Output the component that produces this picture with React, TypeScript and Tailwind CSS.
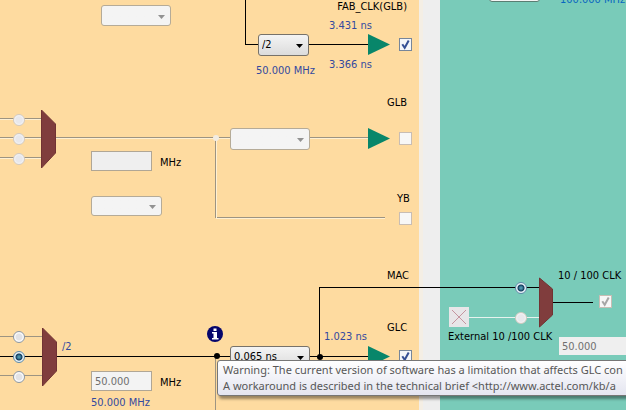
import type { ReactNode } from "react";

const labelFont = "font-['DejaVu_Sans_Condensed','DejaVu_Sans',sans-serif]";

function Caption({ at, htmlFor, children }: { at: string; htmlFor?: string; children: ReactNode }) {
  const cls = `absolute whitespace-nowrap text-[11px] leading-4 ${at}`;
  return htmlFor ? (
    <label htmlFor={htmlFor} className={cls}>{children}</label>
  ) : (
    <span className={cls}>{children}</span>
  );
}

function Dropdown({ at, label, value, disabled }: { at: string; label: string; value?: string; disabled?: boolean }) {
  return (
    <div className={`absolute ${at}`}>
      <select
        aria-label={label}
        disabled={disabled}
        className="block h-full w-full appearance-none rounded-[3px] border border-[#77726a] bg-linear-to-b from-[#f4f4f4] to-[#dcdcdc] pl-[3px] text-[11px] leading-4 text-black opacity-100 disabled:border-[#b5ab98] disabled:from-[#f4f4f4] disabled:to-[#f4f4f4]"
      >
        <option>{value ?? ""}</option>
      </select>
      <svg
        className={`pointer-events-none absolute top-1/2 right-[6px] -mt-px h-1 w-[7px] ${disabled ? "text-[#929292]" : "text-black"}`}
        viewBox="0 0 7 4"
        aria-hidden="true"
      >
        <path d="M0 0h7L3.500 4z" fill="currentColor" />
      </svg>
    </div>
  );
}

function Tick({ at, id, checked, disabled }: { at: string; id: string; checked?: boolean; disabled?: boolean }) {
  return (
    <div className={`absolute size-[13px] ${at}`}>
      <input
        id={id}
        type="checkbox"
        defaultChecked={checked}
        disabled={disabled}
        className="peer block size-full appearance-none border border-[#77869a] bg-[#f4f6f9] disabled:border-[#c8bdb4] disabled:bg-[#f7f7f7]"
      />
      <svg
        className="pointer-events-none absolute inset-0 hidden text-[#344f94] peer-checked:block peer-disabled:text-[#a6a6a6]"
        viewBox="0 0 13 13"
        aria-hidden="true"
      >
        <path d="M3.300 6.200l2.400 3.600 4-7.400" fill="none" stroke="currentColor" strokeWidth="2" />
      </svg>
    </div>
  );
}

function Choice({ at, name, label, checked, disabled }: { at: string; name: string; label: string; checked?: boolean; disabled?: boolean }) {
  return (
    <input
      type="radio"
      name={name}
      aria-label={label}
      defaultChecked={checked}
      disabled={disabled}
      className={`absolute size-3 appearance-none rounded-full border border-[#8e98a3] bg-[radial-gradient(circle,#e3e3e6_0_3px,#fafafa_4px)] checked:border-[#5f8aa8] checked:bg-[radial-gradient(circle_at_50%_50%,#4a93ac_0_1px,#123a5c_3px,#e8f3f8_4px)] disabled:border-[#d3cac0] disabled:bg-[radial-gradient(circle,#e8e8ec_0_3px,#f4f4f6_5px)] ${at}`}
    />
  );
}

function Wiring() {
  return (
    <svg className="pointer-events-none absolute inset-0 h-full w-full" aria-hidden="true" shapeRendering="crispEdges">
      <g fill="none" stroke="#9d9482">
        <path d="M0 118.500H41M0 137.500H41M0 157.500H41M56 137.500H230M309 137.500H368" />
        <path d="M215.500 138V217.500H385" />
        <path d="M0 336.500H42M0 375.500H42M215.500 357V410" />
      </g>
      <g fill="none" stroke="#fff0d2">
        <path d="M0 119.500H41M0 138.500H41M0 158.500H41M56 138.500H230M309 138.500H368" />
        <path d="M216.500 139V218.500H385" />
      </g>
      <g fill="none" stroke="#000">
        <path d="M245.500 0V44.500H258M309 44.500H368" />
        <path d="M0 356.500H42M57 356.500H230M309 356.500H368" />
        <path d="M319.500 357V287.500H540M553 302.500H593" />
      </g>
      <path d="M469 317.500H540" fill="none" stroke="#e6f3ee" />
      <g shapeRendering="geometricPrecision">
        <g fill="#803d3d" stroke="#713333" strokeWidth="1">
          <path d="M41.500 110l14 14v29l-14 15z" />
          <path d="M42.500 328l14 14v29l-14 15z" />
          <path d="M539.500 278l13 11v26l-13 12z" />
        </g>
        <g fill="#08866a">
          <path d="M368 34l22 10.500-22 10.500z" />
          <path d="M368 128l22 10.500-22 10.500z" />
          <path d="M368 346l22 10.500-22 10.500z" />
        </g>
        <circle cx="216" cy="138" r="3" fill="#f2ece3" />
        <circle cx="217" cy="356" r="3" />
        <circle cx="320" cy="357" r="3" />
        <rect x="449" y="307" width="20" height="20" fill="#e8e6e8" />
        <path d="M452 310l14 14m0-14l-14 14" stroke="#c5959f" fill="none" />
        <circle cx="215" cy="334" r="8" fill="#05056c" />
        <path d="M213.500 328.500h3v2.500h-3zM212 332h5v6h1.500v1.500H212V338h1.500v-4.500H212z" fill="#fff" />
      </g>
    </svg>
  );
}

function FabricPanel() {
  return (
    <section aria-label="Fabric clocks" className="relative z-10 w-[419px] shrink-0">
      <Dropdown at="top-[5px] left-[101px] h-[21px] w-[70px]" label="Reference divider" disabled />
      <Dropdown at="top-[34px] left-[258px] h-[22px] w-[51px]" label="GLB divider" value="/2" />
      <Caption at="-top-px right-3" htmlFor="fab-glb">FAB_CLK(GLB)</Caption>
      <Caption at="top-[18px] left-[329px] text-[#33499f]">3.431 ns</Caption>
      <Caption at="top-[57px] left-[329px] text-[#33499f]">3.366 ns</Caption>
      <Caption at="top-[63px] left-[256px] text-[#33499f]">50.000 MHz</Caption>
      <Tick at="top-[38px] left-[399px]" id="fab-glb" checked />

      <Choice at="top-[114px] left-[13px]" name="glb-source" label="GLB source 1" disabled />
      <Choice at="top-[133px] left-[13px]" name="glb-source" label="GLB source 2" disabled />
      <Choice at="top-[153px] left-[13px]" name="glb-source" label="GLB source 3" disabled />
      <Caption at="top-[95px] left-[387px]" htmlFor="glb">GLB</Caption>
      <Dropdown at="top-[128px] left-[230px] h-[22px] w-[80px]" label="GLB delay" disabled />
      <Tick at="top-[132px] left-[399px]" id="glb" disabled />
      <input id="glb-freq" disabled className="absolute top-[151px] left-[91px] h-5 w-[61px] border border-[#b0a695] bg-[#efefef]" />
      <Caption at="top-[155px] left-[160px]" htmlFor="glb-freq">MHz</Caption>
      <Dropdown at="top-[196px] left-[91px] h-5 w-[71px]" label="YB divider" disabled />
      <Caption at="top-[191px] left-[397px]" htmlFor="yb">YB</Caption>
      <Tick at="top-[212px] left-[399px]" id="yb" disabled />

      <Choice at="top-[331px] left-[13px]" name="glc-source" label="GLC source 1" />
      <Choice at="top-[351px] left-[13px]" name="glc-source" label="GLC source 2" checked />
      <Choice at="top-[371px] left-[13px]" name="glc-source" label="GLC source 3" />
      <Caption at="top-[339px] left-[62px] text-[#33499f]">/2</Caption>
      <Caption at="top-[268px] left-[387px]">MAC</Caption>
      <Caption at="top-[320px] left-[387px]" htmlFor="glc">GLC</Caption>
      <Caption at="top-[329px] left-[324px] text-[#33499f]">1.023 ns</Caption>
      <Dropdown at="top-[346px] left-[230px] h-[22px] w-[80px]" label="GLC delay" value="0.065 ns" />
      <Tick at="top-[350px] left-[399px]" id="glc" checked />
      <input
        id="glc-freq"
        disabled
        defaultValue="50.000"
        className="absolute top-[371px] left-[91px] h-5 w-[61px] border border-[#b0a695] bg-[#f3f3f3] pl-[3px] text-[11px] text-[#6f6f6f]"
      />
      <Caption at="top-[375px] left-[160px]" htmlFor="glc-freq">MHz</Caption>
      <Caption at="top-[395px] left-[91px] text-[#33499f]">50.000 MHz</Caption>
    </section>
  );
}

function MacPanel() {
  return (
    <section aria-label="MAC clock" className="relative z-10 min-w-0 flex-1 overflow-hidden">
      <input aria-label="Output frequency" className="absolute -top-5 left-[49px] h-[22px] w-[51px] rounded-[3px] border border-[#5a7d72] bg-[#f4f4f4]" />
      <Caption at="-top-2 left-[120px] text-[#0866c0]">100.000 MHz</Caption>
      <Caption at="top-[268px] left-[118px]" htmlFor="mac-clk">10 / 100 CLK</Caption>
      <Choice at="top-[282px] left-[75px]" name="mac-source" label="MAC clock from GLC" checked />
      <Choice at="top-[312px] left-[75px]" name="mac-source" label="External MAC clock" disabled />
      <Tick at="top-[295px] left-[159px]" id="mac-clk" checked disabled />
      <Caption at="top-[329px] left-[8px]">External 10 /100 CLK</Caption>
      <input
        aria-label="MAC clock frequency"
        disabled
        defaultValue="50.000"
        className="absolute top-[337px] left-[119px] h-[18px] w-20 bg-[#efefef] pl-[3px] text-[11px] text-[#6f6f6f]"
      />
    </section>
  );
}

export default function App() {
  return (
    <main className={`relative flex min-h-screen overflow-hidden text-black ${labelFont}`}>
      <div className="absolute inset-0 flex" aria-hidden="true">
        <div className="w-[419px] shrink-0 bg-[#fedba0]" />
        <div className="w-[21px] shrink-0 border-l-4 border-[#f4eee4] bg-[#eeeeee]" />
        <div className="flex-1 bg-[#79cbb9]" />
      </div>
      <Wiring />
      <FabricPanel />
      <div className="w-[21px] shrink-0" />
      <MacPanel />
      <div
        role="tooltip"
        className="absolute top-[360px] -right-1 left-[217px] z-20 rounded-[3px] border border-[#767676] bg-linear-to-b from-white to-[#e4e5f0] py-px pl-[5px] font-['Noto_Sans',sans-serif] text-[11px] leading-4 whitespace-nowrap text-[#575757] shadow-[2px_3px_3px_rgba(0,0,0,0.4)]"
      >
        <p>Warning: The current version of software has a limitation that affects GLC con</p>
        <p>A workaround is described in the technical brief &lt;http://www.actel.com/kb/a</p>
      </div>
    </main>
  );
}
